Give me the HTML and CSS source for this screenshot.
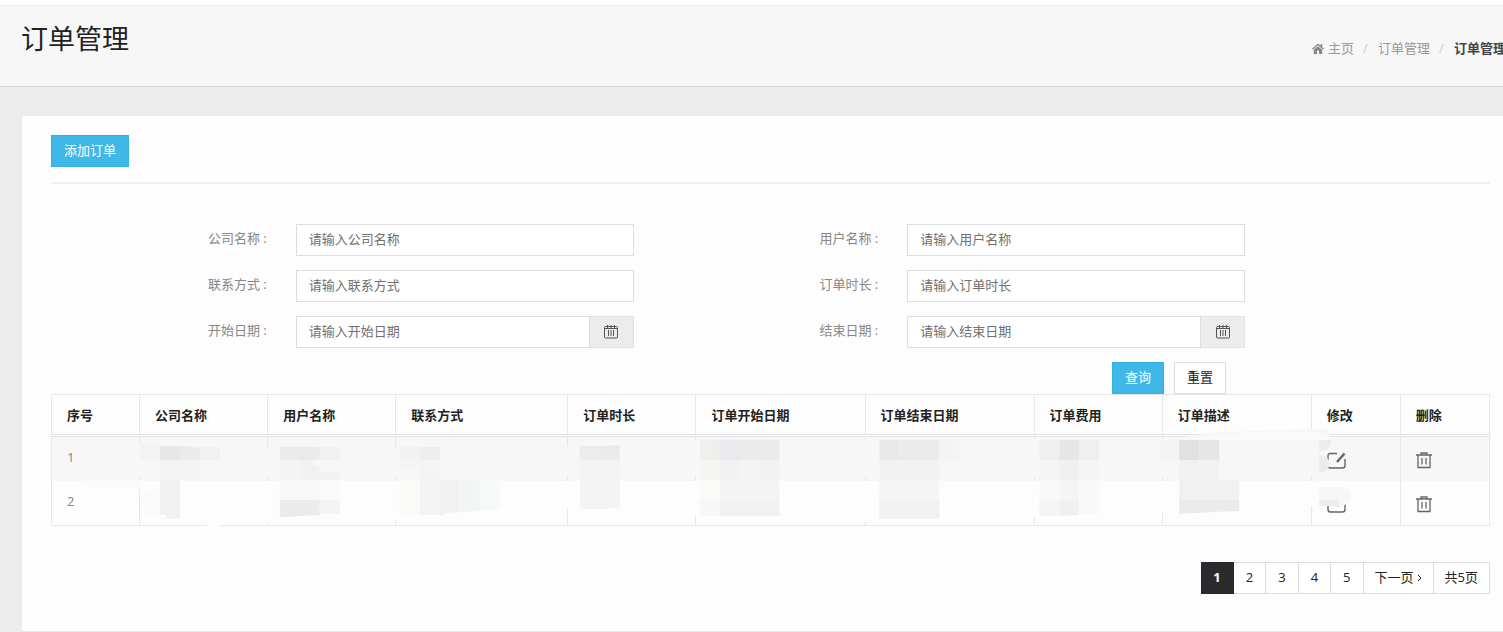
FILE: index.html
```html
<!DOCTYPE html>
<html lang="zh-CN">
<head>
<meta charset="utf-8">
<title>订单管理</title>
<link rel="stylesheet" href="styles.css">
</head>
<body>
<svg width="0" height="0" class="sprite" aria-hidden="true">
  <symbol id="calendar" viewBox="0 0 14 14"><g fill="none" stroke="currentColor"><rect x=".5" y="1.5" width="13" height="11.500" rx="1"/><path d="M1 3.500h12M3.500 0v3M7 0v3M10.500 0v3M4.500 5v6M7 5v6M9.500 5v6"/></g></symbol>
  <symbol id="trash" viewBox="0 0 16 17"><path d="M0 3h16M5 3V1h6v2M2 3v12.500h12V3M6 6v6.500M10 6v6.500" fill="none" stroke="currentColor" stroke-width="1.300"/></symbol>
  <symbol id="edit" viewBox="0 0 19 17"><path d="M10 1.500H3Q1 1.500 1 4v9.500Q1 16 3.500 16h12q2.500 0 2.500-2.500V7" fill="none" stroke="currentColor" stroke-width="1.400"/><path d="M10 10l7.500-8.500" stroke="currentColor" stroke-width="2.400"/></symbol>
</svg>
<header class="page-header">
  <h1 class="page-title">订单管理</h1>
  <nav class="breadcrumb" aria-label="breadcrumb">
    <a href="#"><svg class="home" viewBox="0 0 12 11"><path d="M6 .5L0 5.700l.8 1L6 2.200l5.200 4.500.8-1L10.200 4V1H8.600v1.700zM6 3.200L1.800 6.800V11H5V7.500h2V11h3.200V6.800z" fill="currentColor"/></svg>主页</a>
    <span class="slash">/</span>
    <a href="#">订单管理</a>
    <span class="slash">/</span>
    <strong>订单管理</strong>
  </nav>
</header>
<main class="card">
  <div class="toolbar"><button class="btn primary" type="button">添加订单</button></div>
  <form class="search">
    <div class="field"><label for="company">公司名称 :</label><input id="company" type="text" placeholder="请输入公司名称"></div>
    <div class="field"><label for="user">用户名称 :</label><input id="user" type="text" placeholder="请输入用户名称"></div>
    <div class="field"><label for="contact">联系方式 :</label><input id="contact" type="text" placeholder="请输入联系方式"></div>
    <div class="field"><label for="duration">订单时长 :</label><input id="duration" type="text" placeholder="请输入订单时长"></div>
    <div class="field"><label for="start">开始日期 :</label><div class="group"><input id="start" type="text" placeholder="请输入开始日期"><button type="button" class="addon" aria-label="选择开始日期"><svg><use href="#calendar"/></svg></button></div></div>
    <div class="field"><label for="end">结束日期 :</label><div class="group"><input id="end" type="text" placeholder="请输入结束日期"><button type="button" class="addon" aria-label="选择结束日期"><svg><use href="#calendar"/></svg></button></div></div>
    <div class="actions"><button class="btn primary" type="button">查询</button><button class="btn" type="reset">重置</button></div>
  </form>
  <div class="table-wrap">
    <table class="orders">
      <colgroup><col class="c-no"><col class="c-mid"><col class="c-mid"><col class="c-contact"><col class="c-mid"><col class="c-date"><col class="c-date"><col class="c-mid"><col class="c-desc"><col class="c-act"><col class="c-act"></colgroup>
      <thead><tr><th>序号</th><th>公司名称</th><th>用户名称</th><th>联系方式</th><th>订单时长</th><th>订单开始日期</th><th>订单结束日期</th><th>订单费用</th><th>订单描述</th><th>修改</th><th>删除</th></tr></thead>
      <tbody>
        <tr><td>1</td><td></td><td></td><td></td><td></td><td></td><td></td><td></td><td></td><td><a href="#" aria-label="修改"><svg class="icon edit"><use href="#edit"/></svg></a></td><td><a href="#" aria-label="删除"><svg class="icon"><use href="#trash"/></svg></a></td></tr>
        <tr><td>2</td><td></td><td></td><td></td><td></td><td></td><td></td><td></td><td></td><td><a href="#" aria-label="修改"><svg class="icon edit"><use href="#edit"/></svg></a></td><td><a href="#" aria-label="删除"><svg class="icon"><use href="#trash"/></svg></a></td></tr>
      </tbody>
    </table>
    <svg class="mask" viewBox="51 394 1440 132" preserveAspectRatio="none" aria-hidden="true">
      <path fill="#f7f7f7" d="M120 462h19v-18h26l60 3h340v-1h120l10-5 150-2h325l20-3 31-4 60-2 30-1h15q6 3 6 8 0 8-7 10-6 2-5 6 7 6 2 13-3 5-8 6v5H120z"/>
      <path fill="#fdfdfd" d="M91 481h1230l6 5h17q8 3 7 10t-8 10h-48l-86 1-50 7-130 3-40 5H830l-135-6-135-7-60 6-105 5-65 3h-70l-10-2h-25l-5 5h-12l-5-5-16-2-35-3-10-12 5-15H91z"/>
      <path fill="#fafafa" d="M80 480h60v8H92zM160 489h-12q-14 16 0 27h12zM1200 437l30-3 40-2h50q12 3 11 8H1200z"/>
      <g fill="#f1f1f1"><path d="M140 444h20v16h-20z" fill="#f3f3f3"/><path d="M160 446h20v14h-20z" fill="#e5e8e7"/><path d="M180 446h6l14 2v12h-20z" fill="#ebebeb"/><path d="M200 447h20v13h-20z"/><path d="M160 460h40v20h-40z" fill="#f3f3f3"/><path d="M160 480h20v39h-13l-1-4h-6z"/></g>
      <g fill="#f1f1f1"><path d="M280 447h40v13h-40zM280 500h40v15l-33 2h-7z" fill="#ebebeb"/><path d="M320 447h20v13h-20zM300 460h12l3 6h5v14h-20zM320 472h20v8h-20z"/><path d="M280 460h20v20h-20z" fill="#f4f4f2"/><path d="M280 480h40v20h-40z" fill="#f8f8f8"/><path d="M320 480h20v20h-20z" fill="#fafafa"/><path d="M320 500h20v14h-20z" fill="#f4f4f4"/></g>
      <g fill="#f3f4f4"><path d="M400 447h20v13h-20z" fill="#f2f2f0"/><path d="M420 447h20v13h-20z" fill="#ecefee"/><path d="M400 460h40v7h-40zM420 468h20v12h4v35h-24z"/><path d="M400 480h20v35h-20z" fill="#fafaf9"/><path d="M440 480h20v32l-12 1-4 2h-4z" fill="#f1f1f1"/><path d="M460 480h20v31l-20 1z"/><path d="M480 480h20v30l-20 1z" fill="#f7f9f8"/></g>
      <path d="M580 446h20v14h-20z" fill="#ececec"/><path d="M600 446l20-1v15h-20z" fill="#eaeaea"/><path d="M580 460h40v48h-12l-1 1h-27z" fill="#f4f4f4"/>
      <g fill="#f1f1f1"><path d="M700 440h20v20h-20z" fill="#efefed"/><path d="M720 440h20v20h-20z" fill="#e8eaed"/><path d="M740 440h40v20h-40z" fill="#ebebeb"/><path d="M700 460h20v20h-20z" fill="#f5f5f3"/><path d="M720 460h20v20h-20zM760 460h20v20h-20zM720 500h60v16h-60z"/><path d="M740 460h20v20h-20zM720 480h60v20h-60z" fill="#f4f4f4"/><path d="M700 480h20v20h-20z" fill="#fafaf8"/><path d="M700 500h20v16h-20z" fill="#f7f7f7"/></g>
      <g fill="#f1f1f1"><path d="M880 440h20v20h-20z" fill="#e8e8e8"/><path d="M900 440h40v20h-40z" fill="#ebebeb"/><path d="M940 440h20v20h-20z" fill="#f3f4f4"/><path d="M880 460h60v20h-60z" fill="#f2f2f2"/><path d="M880 480h60v20h-60z" fill="#f5f5f5"/><path d="M880 500h60v19h-60z"/></g>
      <g fill="#f5f5f5"><path d="M1040 440h20v20h-20zM1080 440h20v20h-20z" fill="#efefef"/><path d="M1060 440h20v20h-20z" fill="#e6e6e6"/><path d="M1040 460h20v20h-20zM1080 460h20v20h-20zM1060 480h20v20h-20zM1040 500h20v16h-20z"/><path d="M1060 460h20v20h-20zM1060 500h20v15l-20 1z" fill="#f0f0f0"/><path d="M1040 480h20v20h-20zM1080 480h20v34h-20z" fill="#f9f9f9"/></g>
      <g fill="#f1f1f1"><path d="M1160 440h20v20h-20z" fill="#f4f4f4"/><path d="M1180 440h20v20h-20z" fill="#e1e1e1"/><path d="M1200 440h20v20h-20z" fill="#e6e6e6"/><path d="M1180 460h40v20h-40zM1180 480h60v20h-60z"/><path d="M1180 500h60v11l-27 1-33 2z" fill="#ebebeb"/></g>
      <path d="M1320 440h12q-1 9-7 11h-5zM1320 455q12 1 10 11-1 6-10 7z" fill="#ececec"/><path d="M1320 487h24q8 2 8 9t-9 10h-23z" fill="#f7f7f7"/><path d="M1320 500h20v6h-20z" fill="#ededed"/>
    </svg>
  </div>
  <nav class="pager" aria-label="pagination">
    <a class="current" href="#">1</a><a href="#">2</a><a href="#">3</a><a href="#">4</a><a href="#">5</a><a class="wide" href="#">下一页<svg viewBox="0 0 5 8"><path d="M1 1l3 3-3 3" fill="none" stroke="currentColor"/></svg></a><span class="wide">共5页</span>
  </nav>
</main>
</body>
</html>
```
FILE: styles.css
```css
* { box-sizing: border-box; }
body {
  margin: 0;
  padding-top: 5px;
  background: #ececec linear-gradient(#fff, #fff) no-repeat 0 0 / 100% 5px;
  color: #888;
  font: 13px/20px "Open Sans", "Noto Sans CJK SC", sans-serif;
  overflow-x: hidden;
}
a { color: inherit; text-decoration: none; }
button, input { font: inherit; border-radius: 0; }
.sprite { position: absolute; }
.page-header {
  display: flex;
  justify-content: space-between;
  align-items: flex-start;
  height: 82px;
  padding-left: 21px;
  background: #f7f7f7;
  border-top: 1px solid #ececec;
  border-bottom: 1px solid #d8d8d8;
}
.page-title {
  margin: 13px 0 0;
  color: #222;
  font-size: 27px;
  line-height: 40px;
  font-weight: 400;
}
.breadcrumb {
  display: flex;
  margin: 32px -3px 0 0;
  white-space: nowrap;
  color: #999;
}
.breadcrumb strong { color: #444; font-weight: 700; }
.home { width: 12px; height: 11px; margin-right: 4px; vertical-align: -1px; color: #888; }
.slash { width: 24px; padding-left: 9px; color: #ccc; }
.card {
  margin: 29px 0 0 22px;
  padding: 19px 13px 37px 29px;
  background: #fdfdfd;
  border-bottom: 1px solid #e8e8e8;
}
.btn {
  height: 32px;
  padding: 0 12px 2px;
  border: 1px solid #ddd;
  background: #fff;
  color: #222;
  line-height: 28px;
}
.primary { background: #3fb8e8; border-color: #32b2e4; color: #fff; }
.toolbar { padding-bottom: 15px; border-bottom: 2px solid #f1f1f1; }
.search {
  display: grid;
  grid-template-columns: 42.5% 42.5%;
  row-gap: 14px;
  padding-top: 40px;
}
.field {
  display: grid;
  grid-template-columns: 42% 1fr;
  padding-right: 29px;
}
.field label { padding: 4px 29px 0 0; text-align: right; color: #888; }
.field input {
  width: 100%;
  min-width: 0;
  height: 32px;
  padding: 0 12px 2px;
  border: 1px solid #ddd;
  background: #fff;
}
.field input::placeholder { color: #707070; opacity: 1; }
.group { display: flex; }
.addon {
  flex: 0 0 44px;
  display: grid;
  place-items: center;
  border: 1px solid #e2e2e2;
  border-left: 0;
  background: #ececec;
  color: #555;
}
.addon svg { width: 14px; height: 14px; }
.actions {
  grid-column: 2;
  display: flex;
  justify-content: flex-end;
  gap: 10px;
  padding-right: 48px;
}
.table-wrap { position: relative; }
.orders { width: 100%; border-collapse: collapse; table-layout: fixed; }
.orders th, .orders td {
  padding: 0 15px;
  border-right: 1px solid #e7e7e7;
  border-left: 1px solid #e7e7e7;
  text-align: left;
}
.orders th { height: 41px; border-top: 1px solid #e7e7e7; border-bottom: 3px double #e2e2e2; color: #222; font-weight: 700; }
.orders td { height: 45px; padding-bottom: 4px; }
.orders tbody tr:first-child { background: #f7f7f7; }
.orders tbody tr:last-child { border-bottom: 1px solid #e7e7e7; }
.c-no { width: 88px; }
.c-mid { width: 128px; }
.c-contact { width: 172px; }
.c-date { width: 169px; }
.c-desc { width: 149px; }
.c-act { width: 89px; }
.icon { display: block; width: 16px; height: 17px; margin-top: 8px; color: #666; }
.edit { width: 19px; }
.mask { position: absolute; inset: 0; width: 100%; height: 100%; pointer-events: none; }
.pager { display: flex; justify-content: flex-end; margin-top: 36px; color: #222; }
.pager > * {
  height: 32px;
  padding: 0 12px;
  border: 1px solid #ddd;
  border-left: 0;
  background: #fff;
  line-height: 29px;
}
.pager .wide { padding: 0 11px; }
.pager svg { width: 5px; height: 8px; margin-left: 3px; }
.pager .current { border-color: #2b2b2e; background: #2b2b2e; color: #fff; font-weight: 700; }
```
